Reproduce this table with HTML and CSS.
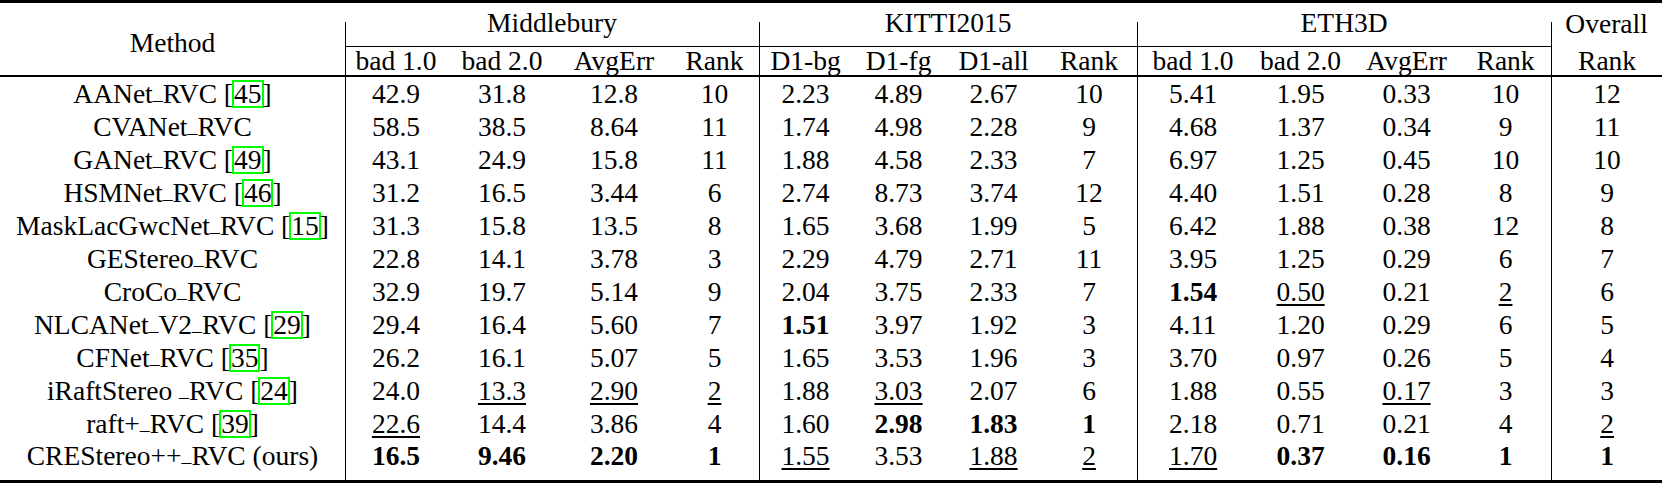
FILE: index.html
```html
<!DOCTYPE html>
<html lang="en">
  <head>
    <meta charset="UTF-8" />
    <meta name="viewport" content="width=device-width, initial-scale=1.0" />
    <title>RVC results</title>
    <link rel="stylesheet" href="styles.css">
  </head>
  <body>
    <table class="results">
      <colgroup>
        <col style="width: 345px">
        <col style="width: 101px"><col style="width: 112px"><col style="width: 112px"><col style="width: 89px">
        <col style="width: 92px"><col style="width: 95px"><col style="width: 95px"><col style="width: 96px">
        <col style="width: 111px"><col style="width: 105px"><col style="width: 107px"><col style="width: 91px">
        <col style="width: 111px">
      </colgroup>
      <thead>
        <tr class="groups">
          <th class="method" rowspan="2">Method</th>
          <th class="grp g" colspan="4">Middlebury</th>
          <th class="grp g" colspan="4">KITTI2015</th>
          <th class="grp g" colspan="4">ETH3D</th>
          <th class="g">Overall</th>
        </tr>
        <tr class="subs">
          <th class="g">bad 1.0</th><th>bad 2.0</th><th>AvgErr</th><th>Rank</th>
          <th class="g">D1-bg</th><th>D1-fg</th><th>D1-all</th><th>Rank</th>
          <th class="g">bad 1.0</th><th>bad 2.0</th><th>AvgErr</th><th>Rank</th>
          <th class="g">Rank</th>
        </tr>
      </thead>
      <tbody>
        <tr>
          <td>AANet<span class="us">_</span>RVC [<span class="cite">45</span>]</td>
          <td class="g">42.9</td><td>31.8</td><td>12.8</td><td>10</td>
          <td class="g">2.23</td><td>4.89</td><td>2.67</td><td>10</td>
          <td class="g">5.41</td><td>1.95</td><td>0.33</td><td>10</td>
          <td class="g">12</td>
        </tr>
        <tr>
          <td>CVANet<span class="us">_</span>RVC</td>
          <td class="g">58.5</td><td>38.5</td><td>8.64</td><td>11</td>
          <td class="g">1.74</td><td>4.98</td><td>2.28</td><td>9</td>
          <td class="g">4.68</td><td>1.37</td><td>0.34</td><td>9</td>
          <td class="g">11</td>
        </tr>
        <tr>
          <td>GANet<span class="us">_</span>RVC [<span class="cite">49</span>]</td>
          <td class="g">43.1</td><td>24.9</td><td>15.8</td><td>11</td>
          <td class="g">1.88</td><td>4.58</td><td>2.33</td><td>7</td>
          <td class="g">6.97</td><td>1.25</td><td>0.45</td><td>10</td>
          <td class="g">10</td>
        </tr>
        <tr>
          <td>HSMNet<span class="us">_</span>RVC [<span class="cite">46</span>]</td>
          <td class="g">31.2</td><td>16.5</td><td>3.44</td><td>6</td>
          <td class="g">2.74</td><td>8.73</td><td>3.74</td><td>12</td>
          <td class="g">4.40</td><td>1.51</td><td>0.28</td><td>8</td>
          <td class="g">9</td>
        </tr>
        <tr>
          <td>MaskLacGwcNet<span class="us">_</span>RVC [<span class="cite">15</span>]</td>
          <td class="g">31.3</td><td>15.8</td><td>13.5</td><td>8</td>
          <td class="g">1.65</td><td>3.68</td><td>1.99</td><td>5</td>
          <td class="g">6.42</td><td>1.88</td><td>0.38</td><td>12</td>
          <td class="g">8</td>
        </tr>
        <tr>
          <td>GEStereo<span class="us">_</span>RVC</td>
          <td class="g">22.8</td><td>14.1</td><td>3.78</td><td>3</td>
          <td class="g">2.29</td><td>4.79</td><td>2.71</td><td>11</td>
          <td class="g">3.95</td><td>1.25</td><td>0.29</td><td>6</td>
          <td class="g">7</td>
        </tr>
        <tr>
          <td>CroCo<span class="us">_</span>RVC</td>
          <td class="g">32.9</td><td>19.7</td><td>5.14</td><td>9</td>
          <td class="g">2.04</td><td>3.75</td><td>2.33</td><td>7</td>
          <td class="g"><b>1.54</b></td><td><u>0.50</u></td><td>0.21</td><td><u>2</u></td>
          <td class="g">6</td>
        </tr>
        <tr>
          <td>NLCANet<span class="us">_</span>V2<span class="us">_</span>RVC [<span class="cite">29</span>]</td>
          <td class="g">29.4</td><td>16.4</td><td>5.60</td><td>7</td>
          <td class="g"><b>1.51</b></td><td>3.97</td><td>1.92</td><td>3</td>
          <td class="g">4.11</td><td>1.20</td><td>0.29</td><td>6</td>
          <td class="g">5</td>
        </tr>
        <tr>
          <td>CFNet<span class="us">_</span>RVC [<span class="cite">35</span>]</td>
          <td class="g">26.2</td><td>16.1</td><td>5.07</td><td>5</td>
          <td class="g">1.65</td><td>3.53</td><td>1.96</td><td>3</td>
          <td class="g">3.70</td><td>0.97</td><td>0.26</td><td>5</td>
          <td class="g">4</td>
        </tr>
        <tr>
          <td>iRaftStereo <span class="us">_</span>RVC [<span class="cite">24</span>]</td>
          <td class="g">24.0</td><td><u>13.3</u></td><td><u>2.90</u></td><td><u>2</u></td>
          <td class="g">1.88</td><td><u>3.03</u></td><td>2.07</td><td>6</td>
          <td class="g">1.88</td><td>0.55</td><td><u>0.17</u></td><td>3</td>
          <td class="g">3</td>
        </tr>
        <tr>
          <td>raft+<span class="us">_</span>RVC [<span class="cite">39</span>]</td>
          <td class="g"><u>22.6</u></td><td>14.4</td><td>3.86</td><td>4</td>
          <td class="g">1.60</td><td><b>2.98</b></td><td><b>1.83</b></td><td><b>1</b></td>
          <td class="g">2.18</td><td>0.71</td><td>0.21</td><td>4</td>
          <td class="g"><u>2</u></td>
        </tr>
        <tr class="last">
          <td>CREStereo++<span class="us">_</span>RVC (ours)</td>
          <td class="g"><b>16.5</b></td><td><b>9.46</b></td><td><b>2.20</b></td><td><b>1</b></td>
          <td class="g"><u>1.55</u></td><td>3.53</td><td><u>1.88</u></td><td><u>2</u></td>
          <td class="g"><u>1.70</u></td><td><b>0.37</b></td><td><b>0.16</b></td><td><b>1</b></td>
          <td class="g"><b>1</b></td>
        </tr>
      </tbody>
    </table>
  </body>
</html>
```

FILE: styles.css
```css
* {
  box-sizing: border-box;
  margin: 0px;
  padding: 0px;
}
body {
  background-color: #fff;
  color: #000;
  font-family: "Liberation Serif", "Times New Roman", serif;
  font-size: 27.5px;
}
.results {
  width: 1662px;
  table-layout: fixed;
  border-collapse: separate;
  border-spacing: 0;
  border-top: 3px solid #000;
  border-bottom: 3px solid #000;
}
th,
td {
  font-weight: normal;
  line-height: 26px;
  text-align: center;
  vertical-align: middle;
  white-space: nowrap;
}
.groups th {
  height: 44px;
  padding-bottom: 3px;
}
/* vertical rules stop short of the top rule */
.groups th.g {
  background: linear-gradient(#000, #000) left bottom / 1px calc(100% - 19px) no-repeat;
}
.groups th.grp {
  border-bottom: 1px solid #000;
}
.subs th,
.method {
  height: 30px;
  border-bottom: 2px solid #000;
}
.method {
  padding-top: 10px;
}
.subs th.g,
td.g {
  border-left: 1px solid #000;
}
td {
  height: 33px;
}
.last td {
  height: 40px;
  padding-bottom: 9px;
}
/* latex-style underscore: short rule sitting on the baseline */
.us {
  font-size: 0.72em;
  vertical-align: 0.14em;
}
.cite {
  display: inline-block;
  line-height: 24px;
  border: 2px solid #00ff00;
  margin: 0 -1px;
}
b {
  font-weight: bold;
}
u {
  text-decoration: underline;
  text-decoration-thickness: 1.5px;
  text-underline-offset: 3px;
}
```
